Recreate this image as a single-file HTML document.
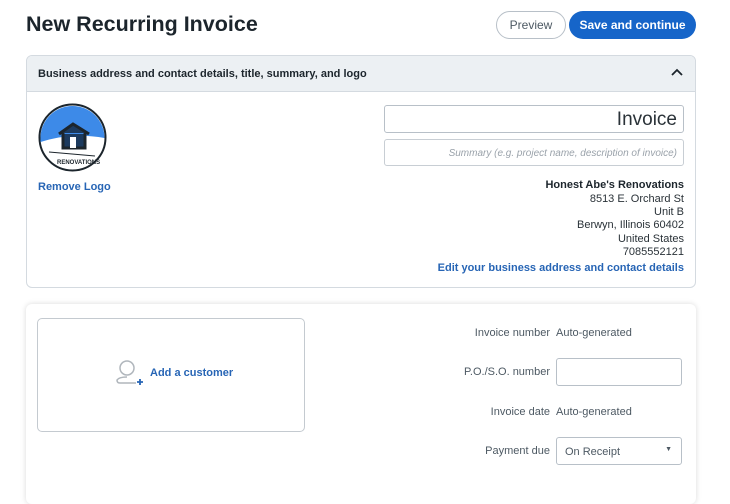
<!DOCTYPE html>
<html><head><style>
*{box-sizing:border-box;margin:0;padding:0}
body{width:730px;height:472px;overflow:hidden;background:#fff;font-family:"Liberation Sans",sans-serif;color:#1c252c;position:relative}
.a{position:absolute}
h1{position:absolute;left:26px;top:12px;font-size:21.5px;font-weight:bold;color:#1c252c}
.btn{position:absolute;top:11px;height:28px;border-radius:14px;font-size:12px;font-weight:bold;display:flex;align-items:center;justify-content:center}
.r{text-align:right;right:46px;font-size:11px;color:#2a3238}
.lbl{font-size:11px;color:#4d5963;text-align:right;right:180px}
.val{font-size:11px;color:#4d5963;left:556px}
</style></head><body>
<h1>New Recurring Invoice</h1>
<div class="btn" style="left:496px;width:70px;border:1px solid #b8c0c8;color:#4d5963;font-weight:normal">Preview</div>
<div class="btn" style="left:569px;width:127px;background:#1665c9;color:#fff">Save and continue</div>

<div class="a" style="left:26px;top:55px;width:670px;height:233px;border:1px solid #d4dae0;border-radius:6px;overflow:hidden">
  <div style="height:36px;background:#ecf0f3;border-bottom:1px solid #d4dae0;font-size:11px;font-weight:bold;padding:12px 0 0 11px;color:#1c252c">Business address and contact details, title, summary, and logo</div>
  <svg class="a" style="right:12px;top:12px" width="12" height="10" viewBox="0 0 12 10"><path d="M1 7 L6 2 L11 7" stroke="#1c252c" stroke-width="1.8" fill="none"/></svg>
</div>
<svg class="a" style="left:37px;top:102px" width="71" height="71" viewBox="0 0 71 71">
 <circle cx="35.5" cy="35.5" r="33" fill="#fff" stroke="#1c252c" stroke-width="2"/>
 <path d="M3.5 36 A32 32 0 0 1 67.5 36 Q35 30 3.5 40Z" fill="#3d8ae8"/>
 <path d="M22 32 L36 22 L52 32 M26 31 V46 H48 V31" stroke="#1c252c" stroke-width="3" fill="#1c3a5e"/>
 <rect x="33" y="35" width="6" height="11" fill="#fff"/>
 <path d="M12 50 L58 54" stroke="#1c252c" stroke-width="1"/>
 <text x="20" y="62" font-size="6" font-weight="bold" fill="#1c252c">RENOVATIONS</text>
</svg>
<div class="a" style="left:38px;top:181px;font-size:11px;font-weight:bold;color:#2765b5">Remove Logo</div>
<div class="a" style="left:384px;top:105px;width:300px;height:28px;border:1px solid #b8c0c8;border-radius:3px;font-size:19px;text-align:right;padding:3px 6px 0 0;color:#2a3238">Invoice</div>
<div class="a" style="left:384px;top:139px;width:300px;height:27px;border:1px solid #c8ced4;border-radius:3px;font-size:10px;font-style:italic;color:#9aa2aa;text-align:right;padding:8px 6px 0 0">Summary (e.g. project name, description of invoice)</div>
<div class="a r" style="top:179px;font-weight:bold;color:#1c252c">Honest Abe's Renovations</div>
<div class="a r" style="top:193px">8513 E. Orchard St</div>
<div class="a r" style="top:206px">Unit B</div>
<div class="a r" style="top:219px">Berwyn, Illinois 60402</div>
<div class="a r" style="top:233px">United States</div>
<div class="a r" style="top:246px">7085552121</div>
<div class="a r" style="top:262px;font-weight:bold;color:#2765b5">Edit your business address and contact details</div>

<div class="a" style="left:26px;top:304px;width:670px;height:200px;border-radius:6px;box-shadow:0 0 6px rgba(0,0,0,.15);background:#fff"></div>
<div class="a" style="left:37px;top:318px;width:268px;height:114px;border:1px solid #c4cad0;border-radius:5px"></div>
<svg class="a" style="left:114px;top:358px" width="32" height="32" viewBox="0 0 32 32"><circle cx="13" cy="10" r="7" fill="none" stroke="#b0b6bc" stroke-width="1.5"/><path d="M22 25 H6 Q3 25 3 22 Q5 19 13 19" fill="none" stroke="#b0b6bc" stroke-width="1.5"/><path d="M26 21 V27 M23 24 H29" stroke="#2765b5" stroke-width="1.8"/></svg>
<div class="a" style="left:150px;top:367px;font-size:11px;font-weight:bold;color:#2765b5">Add a customer</div>
<div class="a lbl" style="top:327px">Invoice number</div>
<div class="a val" style="top:327px">Auto-generated</div>
<div class="a lbl" style="top:366px">P.O./S.O. number</div>
<div class="a" style="left:556px;top:358px;width:126px;height:28px;border:1px solid #b8c0c8;border-radius:3px"></div>
<div class="a lbl" style="top:406px">Invoice date</div>
<div class="a val" style="top:406px">Auto-generated</div>
<div class="a lbl" style="top:445px">Payment due</div>
<div class="a" style="left:556px;top:437px;width:126px;height:28px;border:1px solid #b8c0c8;border-radius:3px;font-size:11px;color:#4d5963;padding:8px 0 0 8px">On Receipt<span style="position:absolute;right:9px;top:8px;font-size:7px">▼</span></div>
</body></html>
